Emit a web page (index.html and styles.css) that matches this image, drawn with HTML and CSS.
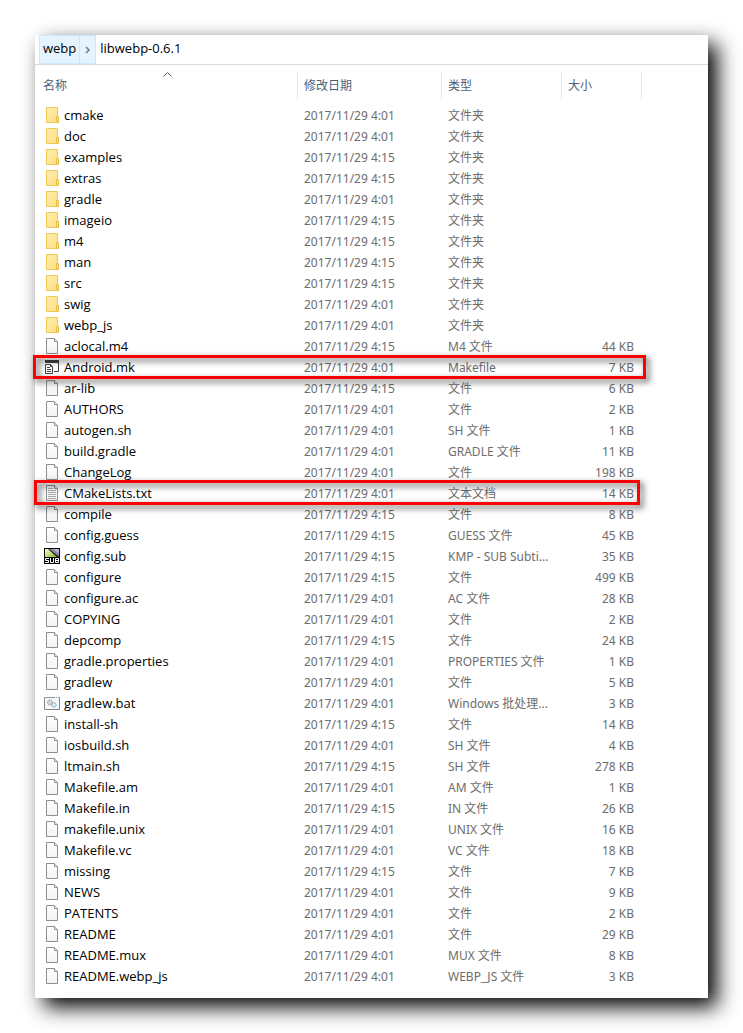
FILE: index.html
```html
<!DOCTYPE html>
<html lang="zh-CN">
<head>
<meta charset="utf-8">
<meta name="viewport" content="width=device-width, initial-scale=1">
<title>libwebp-0.6.1</title>
<link rel="stylesheet" href="styles.css">
</head>
<body>
<svg class="sprite" aria-hidden="true">
  <defs>
    <linearGradient id="gold" x1="0" y1="0" x2="1" y2="1"><stop offset="0" stop-color="#ffeeb0"/><stop offset="1" stop-color="#ffdf7f"/></linearGradient>
    <linearGradient id="paper" x1="0" y1="0" x2="0" y2="1"><stop offset="0" stop-color="#fff"/><stop offset="1" stop-color="#f1f4f4"/></linearGradient>
    <linearGradient id="lime" x1="0" y1="0" x2="1" y2="1"><stop offset="0" stop-color="#fbffe0"/><stop offset="1" stop-color="#86b81a"/></linearGradient>
  </defs>
  <symbol id="folder" viewBox="0 0 16 16">
    <path d="M2.500 .5h11v15h-11z" fill="url(#gold)" stroke="#edc95a"/>
    <path d="M12.500 9.500h2v6h-2z" fill="#ffe28a" stroke="#e6bd45"/>
  </symbol>
  <symbol id="file" viewBox="0 0 16 16">
    <path d="M2.500 .5h8l3 3v12h-11z" fill="url(#paper)" stroke="#8d9090"/>
    <path d="M10.500 .5v3h3" fill="#e9eaea" stroke="#8d9090"/>
  </symbol>
  <symbol id="text" viewBox="0 0 16 16">
    <path d="M2.500 .5h8l3 3v12h-11z" fill="#f7f8f8" stroke="#8d9090"/>
    <path d="M10.500 .5v3h3" fill="#e9eaea" stroke="#8d9090"/>
    <path d="M4 3.500h5M4 5.500h8M4 7.500h8M4 9.500h8M4 11.500h8M4 13.500h8" stroke="#a6a8a8"/>
  </symbol>
  <symbol id="make" viewBox="0 0 16 16">
    <path d="M1 1h14v3H1z" fill="#424242"/>
    <path d="M14.500 4v8.500H10" fill="none" stroke="#424242"/>
    <path d="M1.500 5.500h5l2 2v7h-7z" fill="#fff" stroke="#424242"/>
    <path d="M3 8.500h3M3 10.500h4M3 12.500h4M6.500 5.500v2h2" fill="none" stroke="#424242"/>
  </symbol>
  <symbol id="sub" viewBox="0 0 16 16">
    <path d="M0 0h16v16H0z" fill="#050505"/>
    <path d="M1 1h3l9 8H1z" fill="url(#lime)"/>
    <path d="M5 1h10v8z" fill="#8b82a5"/>
    <path d="M9 1h6v5z" fill="#b6b0c8"/>
    <path d="M5 10.500H1.500v2h3v2H1M6.500 10v4.500h3V10M11.500 10.500h3v4h-3zM11.500 12.500h3" fill="none" stroke="#fff"/>
  </symbol>
  <symbol id="bat" viewBox="0 0 16 16">
    <path d="M.5 2.500h15v12H.5z" fill="#f7f7f7" stroke="#858585"/>
    <path d="M1 2.500h14" stroke="#8c969c"/>
    <path d="M11 2.500h1M13 2.500h1" stroke="#fff"/>
    <circle cx="6" cy="7.500" r="2.500" fill="#ddd" stroke="#868d91" stroke-dasharray="1.200 .6"/>
    <circle cx="6" cy="7.500" r="1" fill="#fff" stroke="#9aa0a3" stroke-width=".5"/>
    <circle cx="10" cy="10" r="2.200" fill="#cfe5f5" stroke="#729dbb" stroke-dasharray="1.200 .6"/>
    <circle cx="10" cy="10" r=".8" fill="#fff"/>
  </symbol>
</svg>
<main class="window">
  <nav class="path" aria-label="路径">
    <a class="crumb crumb-active" href="#">webp</a>
    <button class="crumb-arrow" type="button" aria-label="展开"><svg width="6" height="8" viewBox="0 0 6 8"><path d="M1 1l3 3-3 3" fill="none" stroke="#7a7a7a" stroke-width="1.500"/></svg></button>
    <a class="crumb" href="#">libwebp-0.6.1</a>
  </nav>
  <table class="files">
    <colgroup><col class="col-name"><col class="col-date"><col class="col-type"><col class="col-size"><col></colgroup>
    <thead>
      <tr>
        <th scope="col"><div class="head">名称<svg class="sort" width="9" height="5" viewBox="0 0 9 5"><path d="M.5 4.500l4-4 4 4" fill="none" stroke="#5a5a5a"/></svg></div></th>
        <th scope="col"><div class="head">修改日期</div></th>
        <th scope="col"><div class="head">类型</div></th>
        <th scope="col"><div class="head">大小</div></th>
        <td></td>
      </tr>
    </thead>
    <tbody>
      <tr><td><svg class="icon"><use href="#folder"/></svg>cmake</td><td>2017/11/29 4:01</td><td>文件夹</td><td></td><td></td></tr>
      <tr><td><svg class="icon"><use href="#folder"/></svg>doc</td><td>2017/11/29 4:01</td><td>文件夹</td><td></td><td></td></tr>
      <tr><td><svg class="icon"><use href="#folder"/></svg>examples</td><td>2017/11/29 4:15</td><td>文件夹</td><td></td><td></td></tr>
      <tr><td><svg class="icon"><use href="#folder"/></svg>extras</td><td>2017/11/29 4:15</td><td>文件夹</td><td></td><td></td></tr>
      <tr><td><svg class="icon"><use href="#folder"/></svg>gradle</td><td>2017/11/29 4:01</td><td>文件夹</td><td></td><td></td></tr>
      <tr><td><svg class="icon"><use href="#folder"/></svg>imageio</td><td>2017/11/29 4:15</td><td>文件夹</td><td></td><td></td></tr>
      <tr><td><svg class="icon"><use href="#folder"/></svg>m4</td><td>2017/11/29 4:15</td><td>文件夹</td><td></td><td></td></tr>
      <tr><td><svg class="icon"><use href="#folder"/></svg>man</td><td>2017/11/29 4:15</td><td>文件夹</td><td></td><td></td></tr>
      <tr><td><svg class="icon"><use href="#folder"/></svg>src</td><td>2017/11/29 4:15</td><td>文件夹</td><td></td><td></td></tr>
      <tr><td><svg class="icon"><use href="#folder"/></svg>swig</td><td>2017/11/29 4:01</td><td>文件夹</td><td></td><td></td></tr>
      <tr><td><svg class="icon"><use href="#folder"/></svg>webp_js</td><td>2017/11/29 4:01</td><td>文件夹</td><td></td><td></td></tr>
      <tr><td><svg class="icon"><use href="#file"/></svg>aclocal.m4</td><td>2017/11/29 4:15</td><td>M4 文件</td><td>44 KB</td><td></td></tr>
      <tr class="marked"><td><svg class="icon"><use href="#make"/></svg>Android.mk<span class="mark mark-wide"></span></td><td>2017/11/29 4:01</td><td>Makefile</td><td>7 KB</td><td></td></tr>
      <tr><td><svg class="icon"><use href="#file"/></svg>ar-lib</td><td>2017/11/29 4:15</td><td>文件</td><td>6 KB</td><td></td></tr>
      <tr><td><svg class="icon"><use href="#file"/></svg>AUTHORS</td><td>2017/11/29 4:01</td><td>文件</td><td>2 KB</td><td></td></tr>
      <tr><td><svg class="icon"><use href="#file"/></svg>autogen.sh</td><td>2017/11/29 4:01</td><td>SH 文件</td><td>1 KB</td><td></td></tr>
      <tr><td><svg class="icon"><use href="#file"/></svg>build.gradle</td><td>2017/11/29 4:01</td><td>GRADLE 文件</td><td>11 KB</td><td></td></tr>
      <tr><td><svg class="icon"><use href="#file"/></svg>ChangeLog</td><td>2017/11/29 4:01</td><td>文件</td><td>198 KB</td><td></td></tr>
      <tr class="marked"><td><svg class="icon"><use href="#text"/></svg>CMakeLists.txt<span class="mark mark-narrow"></span></td><td>2017/11/29 4:01</td><td>文本文档</td><td>14 KB</td><td></td></tr>
      <tr><td><svg class="icon"><use href="#file"/></svg>compile</td><td>2017/11/29 4:15</td><td>文件</td><td>8 KB</td><td></td></tr>
      <tr><td><svg class="icon"><use href="#file"/></svg>config.guess</td><td>2017/11/29 4:15</td><td>GUESS 文件</td><td>45 KB</td><td></td></tr>
      <tr><td><svg class="icon"><use href="#sub"/></svg>config.sub</td><td>2017/11/29 4:15</td><td>KMP - SUB Subti...</td><td>35 KB</td><td></td></tr>
      <tr><td><svg class="icon"><use href="#file"/></svg>configure</td><td>2017/11/29 4:15</td><td>文件</td><td>499 KB</td><td></td></tr>
      <tr><td><svg class="icon"><use href="#file"/></svg>configure.ac</td><td>2017/11/29 4:01</td><td>AC 文件</td><td>28 KB</td><td></td></tr>
      <tr><td><svg class="icon"><use href="#file"/></svg>COPYING</td><td>2017/11/29 4:01</td><td>文件</td><td>2 KB</td><td></td></tr>
      <tr><td><svg class="icon"><use href="#file"/></svg>depcomp</td><td>2017/11/29 4:15</td><td>文件</td><td>24 KB</td><td></td></tr>
      <tr><td><svg class="icon"><use href="#file"/></svg>gradle.properties</td><td>2017/11/29 4:01</td><td>PROPERTIES 文件</td><td>1 KB</td><td></td></tr>
      <tr><td><svg class="icon"><use href="#file"/></svg>gradlew</td><td>2017/11/29 4:01</td><td>文件</td><td>5 KB</td><td></td></tr>
      <tr><td><svg class="icon"><use href="#bat"/></svg>gradlew.bat</td><td>2017/11/29 4:01</td><td>Windows 批处理...</td><td>3 KB</td><td></td></tr>
      <tr><td><svg class="icon"><use href="#file"/></svg>install-sh</td><td>2017/11/29 4:15</td><td>文件</td><td>14 KB</td><td></td></tr>
      <tr><td><svg class="icon"><use href="#file"/></svg>iosbuild.sh</td><td>2017/11/29 4:01</td><td>SH 文件</td><td>4 KB</td><td></td></tr>
      <tr><td><svg class="icon"><use href="#file"/></svg>ltmain.sh</td><td>2017/11/29 4:15</td><td>SH 文件</td><td>278 KB</td><td></td></tr>
      <tr><td><svg class="icon"><use href="#file"/></svg>Makefile.am</td><td>2017/11/29 4:01</td><td>AM 文件</td><td>1 KB</td><td></td></tr>
      <tr><td><svg class="icon"><use href="#file"/></svg>Makefile.in</td><td>2017/11/29 4:15</td><td>IN 文件</td><td>26 KB</td><td></td></tr>
      <tr><td><svg class="icon"><use href="#file"/></svg>makefile.unix</td><td>2017/11/29 4:01</td><td>UNIX 文件</td><td>16 KB</td><td></td></tr>
      <tr><td><svg class="icon"><use href="#file"/></svg>Makefile.vc</td><td>2017/11/29 4:01</td><td>VC 文件</td><td>18 KB</td><td></td></tr>
      <tr><td><svg class="icon"><use href="#file"/></svg>missing</td><td>2017/11/29 4:15</td><td>文件</td><td>7 KB</td><td></td></tr>
      <tr><td><svg class="icon"><use href="#file"/></svg>NEWS</td><td>2017/11/29 4:01</td><td>文件</td><td>9 KB</td><td></td></tr>
      <tr><td><svg class="icon"><use href="#file"/></svg>PATENTS</td><td>2017/11/29 4:01</td><td>文件</td><td>2 KB</td><td></td></tr>
      <tr><td><svg class="icon"><use href="#file"/></svg>README</td><td>2017/11/29 4:01</td><td>文件</td><td>29 KB</td><td></td></tr>
      <tr><td><svg class="icon"><use href="#file"/></svg>README.mux</td><td>2017/11/29 4:01</td><td>MUX 文件</td><td>8 KB</td><td></td></tr>
      <tr><td><svg class="icon"><use href="#file"/></svg>README.webp_js</td><td>2017/11/29 4:01</td><td>WEBP_JS 文件</td><td>3 KB</td><td></td></tr>
    </tbody>
  </table>
</main>
</body>
</html>
```
FILE: styles.css
```css
* { box-sizing: border-box; }
body {
  margin: 0;
  padding: 35px;
  background: #fff;
  color: #000;
  font: 12px/20px "Noto Sans", "Noto Sans CJK SC", sans-serif;
}
.sprite { position: absolute; width: 0; height: 0; }
.window {
  padding-bottom: 11px;
  background: #fff;
  box-shadow: 9px 9px 20px #000;
}
.path {
  display: flex;
  height: 30px;
  padding-left: 4px;
  border-bottom: 1px solid #d9d9d9;
  font-family: "Open Sans", sans-serif;
  line-height: 27px;
}
.crumb { padding: 0 4px; color: #000; text-decoration: none; font-size: 13px; }
.crumb-active, .crumb-arrow { background: #e5f3ff; border: 1px solid #cce8ff; }
.crumb-active { padding: 0 3px; line-height: 25px; }
.crumb-arrow {
  display: flex;
  align-items: center;
  justify-content: center;
  width: 16px;
  padding: 0;
  border-left: 0;
}
.files { width: 100%; table-layout: fixed; border-collapse: collapse; }
.col-name { width: 263px; }
.col-date { width: 144px; }
.col-type { width: 120px; }
.col-size { width: 80px; }
th { height: 40px; padding: 0; font-weight: 400; text-align: left; color: #4c607a; }
.head {
  position: relative;
  height: 28px;
  padding-left: 6px;
  border-right: 1px solid #e5e5e5;
  line-height: 30px;
}
th:first-child .head { padding-left: 8px; }
.sort { position: absolute; top: 1px; left: 49%; }
tbody td {
  height: 21px;
  padding: 0 0 0 6px;
  color: #6d6d6d;
  white-space: nowrap;
}
tbody td:first-child {
  padding: 0 0 1px 9px;
  color: #000;
  font-family: "Open Sans", sans-serif;
  font-size: 13px;
}
tbody td:nth-child(4) { padding: 0 8px 0 0; text-align: right; }
.icon { width: 16px; height: 16px; margin-right: 4px; vertical-align: -3px; }
.marked { position: relative; }
.mark {
  position: absolute;
  border: 3px solid #f00;
  filter: drop-shadow(3px 3px 3px rgba(0, 0, 0, .7));
}
.mark-wide { top: -2px; bottom: -1px; left: -2px; right: 62px; }
.mark-narrow { top: -3px; bottom: -1px; left: -1px; right: 68px; }
```
